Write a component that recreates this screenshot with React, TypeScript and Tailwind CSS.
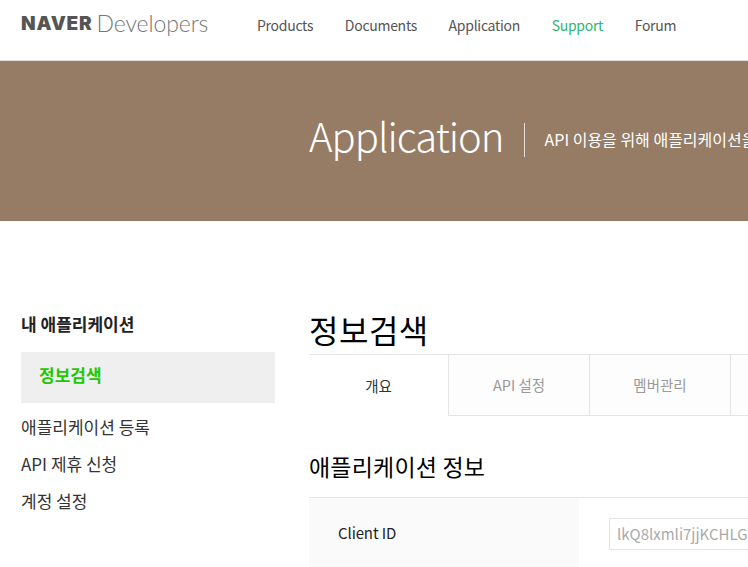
export default function App() {
  const font = { fontFamily: '"Noto Sans CJK KR", "Noto Sans", sans-serif' };
  return (
    <div style={font} className="w-[748px] h-[567px] overflow-hidden bg-white relative">
      <header className="h-[61px] flex items-center border-b border-[#dcdcdc] pl-[21px] w-[748px] pb-[1px]">
        <div className="flex items-center w-[236px] shrink-0 h-[30px] -mt-[12px]">
          <span className="text-[19px] font-black text-[#555555] tracking-[0.8px] leading-none" style={{ fontFamily: 'Inter, sans-serif' }}>NAVER</span>
          <span className="text-[23px] font-light text-[#777777] ml-[4px] leading-none tracking-[-0.1px]" style={{ fontFamily: 'Lato, sans-serif' }}>Developers</span>
        </div>
        <nav className="flex gap-[31.6px] text-[14px] text-[#555555] tracking-[-0.28px] -mt-[8px]">
          <span>Products</span>
          <span>Documents</span>
          <span>Application</span>
          <span className="text-[#2db573]">Support</span>
          <span>Forum</span>
        </nav>
      </header>
      <section className="h-[160px] bg-[#967c64] flex items-center pl-[309px] pb-[7px] whitespace-nowrap text-white">
        <span className="text-[40px] font-light leading-none tracking-[-1px] -mt-[5px]">Application</span>
        <span className="w-px h-[34px] bg-[#e6dfd8] ml-[20px] mr-[20px] shrink-0 mt-[5px]"></span>
        <span className="text-[16px] mt-[3px]">API 이용을 위해 애플리케이션을 등록합니다.</span>
      </section>
      <div className="flex pt-[90px] whitespace-nowrap">
        <aside className="w-[309px] shrink-0 pl-[21px]">
          <div className="text-[17px] font-bold text-[#222222] leading-[28px] -mt-[1px]">내 애플리케이션</div>
          <div className="w-[254px] h-[51px] bg-[#efefef] mt-[14px] flex items-center pl-[18px] pb-[5px] text-[17px] font-bold text-[#1ec800]">정보검색</div>
          <div className="mt-[5px] flex flex-col text-[17px] text-[#333333] leading-[37px]">
            <span>애플리케이션 등록</span>
            <span>API 제휴 신청</span>
            <span>계정 설정</span>
          </div>
        </aside>
        <main className="w-[439px] shrink-0 overflow-hidden">
          <h1 className="text-[32px] font-normal text-black leading-[36px] tracking-[0.5px] mb-[7px]">정보검색</h1>
          <div className="flex h-[62px] border-t border-[#e5e5e5] w-[600px]">
            <div className="w-[140px] border-r border-[#e5e5e5] flex items-center justify-center text-[14.5px] text-[#333333]">개요</div>
            <div className="w-[141px] border-r border-b border-[#e5e5e5] bg-[#fdfdfd] flex items-center justify-center text-[14.5px] text-[#999999]">API 설정</div>
            <div className="w-[141px] border-r border-b border-[#e5e5e5] bg-[#fdfdfd] flex items-center justify-center text-[14.5px] text-[#999999]">멤버관리</div>
            <div className="w-[141px] border-r border-b border-[#e5e5e5] bg-[#fdfdfd]"></div>
          </div>
          <h2 className="text-[23px] font-normal text-black leading-[34px] mt-[33px] tracking-[0.2px]">애플리케이션 정보</h2>
          <div className="flex border-t border-[#e5e5e5] mt-[14px] w-[600px] h-[80px]">
            <div className="w-[270px] bg-[#fafafa] pl-[29px] pt-[23px] text-[15px] text-[#222222] leading-[24px] tracking-[-0.1px]">Client ID</div>
            <div className="pl-[30px] pt-[20px]">
              <div className="w-[300px] h-[32px] border border-[#e5e5e5] pl-[7px] text-[15px] leading-[30px] text-[#aaaaaa]">lkQ8lxmli7jjKCHLGdRm</div>
            </div>
          </div>
        </main>
      </div>
    </div>
  );
}
